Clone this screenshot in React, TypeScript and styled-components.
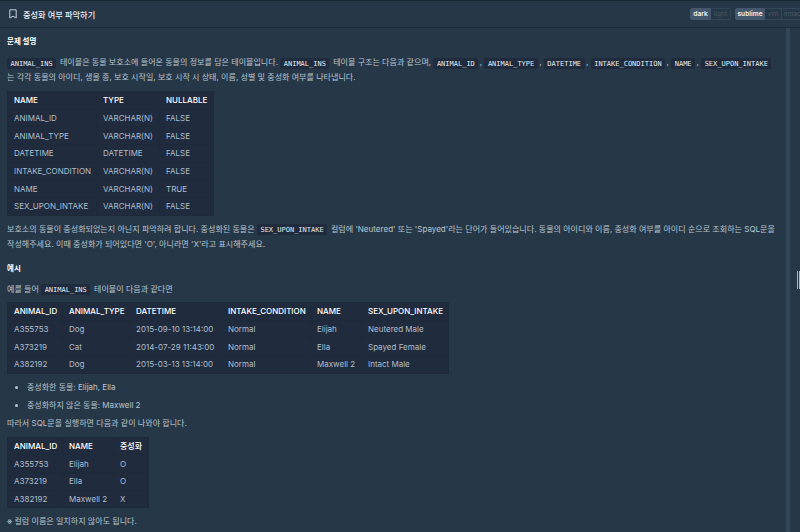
import React from "react";
import styled, { createGlobalStyle } from "styled-components";

const Global = createGlobalStyle`
  html, body { margin: 0; padding: 0; background: #263747; height: 100%; overflow: hidden; }
  #root { height: 100%; }
`;

const Page = styled.div`
  width: 800px;
  height: 532px;
  overflow: hidden;
  box-sizing: border-box;
  border-top: 1px solid #1a2733;
  background: #263747;
  color: #b8c5d1;
  font-family: Inter, "Noto Sans CJK KR", sans-serif;
  font-size: 8.05px;
  display: flex;
  flex-direction: column;
`;

const Header = styled.header`
  flex: none;
  height: 27px;
  box-sizing: border-box;
  border-bottom: 1px solid #1f2d3a;
  display: flex;
  align-items: center;
  padding-left: 9px;
  overflow: hidden;
`;

const BookmarkIcon = styled.svg`
  flex: none;
  width: 8px;
  height: 10px;
`;

const Title = styled.h1`
  margin: 0 0 0 6px;
  font-size: 8.2px;
  font-weight: 500;
  color: #e9ecf3;
  flex: 0 0 667px;
`;

const ToggleGroup = styled.div`
  display: flex;
  height: 12px;
  margin-right: 4px;
  border-radius: 2px;
  flex: none;
`;

const Toggle = styled.span<{ $on?: boolean; $w: number }>`
  display: flex;
  align-items: center;
  justify-content: center;
  box-sizing: border-box;
  width: ${(p) => p.$w}px;
  font-size: 6.6px;
  font-weight: ${(p) => (p.$on ? 600 : 400)};
  color: ${(p) => (p.$on ? "#f0f3f7" : "#44576c")};
  background: ${(p) => (p.$on ? "#44576c" : "transparent")};
  border: 1px solid ${(p) => (p.$on ? "#44576c" : "#34475a")};
  border-left-width: ${(p) => (p.$on ? 1 : 0)}px;
  &:first-child { border-radius: 2px 0 0 2px; }
  &:last-child { border-radius: 0 2px 2px 0; }
`;

const Body = styled.div`
  flex: 1;
  display: flex;
  min-height: 0;
`;

const Content = styled.main`
  width: 786px;
  flex: none;
  box-sizing: border-box;
  padding: 8px 7px 0;
  overflow: hidden;
`;

const ScrollTrack = styled.div`
  width: 4px;
  flex: none;
  background: #32465a;
`;

const Gutter = styled.div`
  flex: 1;
  position: relative;
`;

const Grip = styled.span`
  position: absolute;
  right: 0;
  top: 243px;
  width: 1px;
  height: 18px;
  border-left: 1px solid #a9b8c6;
  border-right: 1px solid #a9b8c6;
`;

const Heading = styled.h2<{ $top?: number }>`
  margin: ${(p) => p.$top ?? 0}px 0 0;
  font-size: 7.5px;
  line-height: 12px;
  font-weight: 700;
  color: #fff;
`;

const Para = styled.p<{ $top?: number }>`
  margin: ${(p) => p.$top ?? 0}px 0 0;
  font-size: 8.05px;
  line-height: 15px;
`;

const Code = styled.code`
  font-family: "DejaVu Sans Mono", "Noto Sans CJK KR", monospace;
  font-size: 7px;
  line-height: 1;
  color: #e2ebf2;
  background: #202b3d;
  border-radius: 2px;
  padding: 1.5px 3.5px;
  margin: 0 1.5px 0 0;
`;

const Table = styled.table<{ $top: number }>`
  margin-top: ${(p) => p.$top}px;
  border-collapse: collapse;
  table-layout: fixed;
  background: #202b3d;
  font-size: 8px;
`;

const Th = styled.th<{ $w: number }>`
  width: ${(p) => p.$w}px;
  height: 17.7px;
  box-sizing: border-box;
  padding: 0 0 0 6px;
  text-align: left;
  font-weight: 500;
  color: #fff;
  border: 1px solid #1d2a3a;
  white-space: nowrap;
`;

const Td = styled.td`
  height: 17.7px;
  box-sizing: border-box;
  padding: 0 0 0 6px;
  color: #aebfce;
  border: 1px solid #1d2a3a;
  white-space: nowrap;
`;

const BulletList = styled.ul`
  margin: 4px 0 0;
  padding: 0 0 0 20px;
  list-style: disc;
`;

const Bullet = styled.li`
  line-height: 18px;
  font-size: 8px;
`;

type DataTableProps = { top: number; widths: number[]; head: string[]; rows: string[][] };

const DataTable = ({ top, widths, head, rows }: DataTableProps) => (
  <Table $top={top} style={{ width: widths.reduce((a, b) => a + b, 0) }}>
    <thead>
      <tr>
        {head.map((h, i) => (
          <Th key={h} $w={widths[i]}>{h}</Th>
        ))}
      </tr>
    </thead>
    <tbody>
      {rows.map((r) => (
        <tr key={r.join()}>
          {r.map((c, i) => (
            <Td key={i}>{c}</Td>
          ))}
        </tr>
      ))}
    </tbody>
  </Table>
);

export default function App() {
  return (
    <Page>
      <Global />
      <Header>
        <BookmarkIcon viewBox="0 0 8 10" fill="none" stroke="#c5d0da" strokeWidth="1">
          <path d="M0.8 0.8H7.2V9L4 7.2L0.8 9Z" />
        </BookmarkIcon>
        <Title>중성화 여부 파악하기</Title>
        <ToggleGroup>
          <Toggle $on $w={21}>dark</Toggle>
          <Toggle $w={20}>light</Toggle>
        </ToggleGroup>
        <ToggleGroup>
          <Toggle $on $w={30}>sublime</Toggle>
          <Toggle $w={17}>vim</Toggle>
          <Toggle $w={25}>emacs</Toggle>
        </ToggleGroup>
      </Header>
      <Body>
        <Content>
          <Heading>문제 설명</Heading>
          <Para $top={7}>
            <Code>ANIMAL_INS</Code> 테이블은 동물 보호소에 들어온 동물의 정보를 담은 테이블입니다. <Code>ANIMAL_INS</Code> 테이블 구조는 다음과 같으며, <Code>ANIMAL_ID</Code>, <Code>ANIMAL_TYPE</Code>, <Code>DATETIME</Code>, <Code>INTAKE_CONDITION</Code>, <Code>NAME</Code>, <Code>SEX_UPON_INTAKE</Code> 는 각각 동물의 아이디, 생물 종, 보호 시작일, 보호 시작 시 상태, 이름, 성별 및 중성화 여부를 나타냅니다.
          </Para>
          <DataTable
            top={6}
            widths={[89, 63, 54]}
            head={["NAME", "TYPE", "NULLABLE"]}
            rows={[
              ["ANIMAL_ID", "VARCHAR(N)", "FALSE"],
              ["ANIMAL_TYPE", "VARCHAR(N)", "FALSE"],
              ["DATETIME", "DATETIME", "FALSE"],
              ["INTAKE_CONDITION", "VARCHAR(N)", "FALSE"],
              ["NAME", "VARCHAR(N)", "TRUE"],
              ["SEX_UPON_INTAKE", "VARCHAR(N)", "FALSE"],
            ]}
          />
          <Para $top={6}>
            보호소의 동물이 중성화되었는지 아닌지 파악하려 합니다. 중성화된 동물은 <Code>SEX_UPON_INTAKE</Code> 컬럼에 'Neutered' 또는 'Spayed'라는 단어가 들어있습니다. 동물의 아이디와 이름, 중성화 여부를 아이디 순으로 조회하는 SQL문을 작성해주세요. 이때 중성화가 되어있다면 'O', 아니라면 'X'라고 표시해주세요.
          </Para>
          <Heading $top={11}>예시</Heading>
          <Para $top={7}>
            예를 들어 <Code>ANIMAL_INS</Code> 테이블이 다음과 같다면
          </Para>
          <DataTable
            top={5}
            widths={[55, 67, 92, 89, 51, 87]}
            head={["ANIMAL_ID", "ANIMAL_TYPE", "DATETIME", "INTAKE_CONDITION", "NAME", "SEX_UPON_INTAKE"]}
            rows={[
              ["A355753", "Dog", "2015-09-10 13:14:00", "Normal", "Elijah", "Neutered Male"],
              ["A373219", "Cat", "2014-07-29 11:43:00", "Normal", "Ella", "Spayed Female"],
              ["A382192", "Dog", "2015-03-13 13:14:00", "Normal", "Maxwell 2", "Intact Male"],
            ]}
          />
          <BulletList>
            <Bullet>중성화한 동물: Elijah, Ella</Bullet>
            <Bullet>중성화하지 않은 동물: Maxwell 2</Bullet>
          </BulletList>
          <Para $top={2}>따라서 SQL문을 실행하면 다음과 같이 나와야 합니다.</Para>
          <DataTable
            top={6}
            widths={[55, 51, 35]}
            head={["ANIMAL_ID", "NAME", "중성화"]}
            rows={[
              ["A355753", "Elijah", "O"],
              ["A373219", "Ella", "O"],
              ["A382192", "Maxwell 2", "X"],
            ]}
          />
          <Para $top={6}>※ 컬럼 이름은 일치하지 않아도 됩니다.</Para>
        </Content>
        <ScrollTrack />
        <Gutter>
          <Grip />
        </Gutter>
      </Body>
    </Page>
  );
}
